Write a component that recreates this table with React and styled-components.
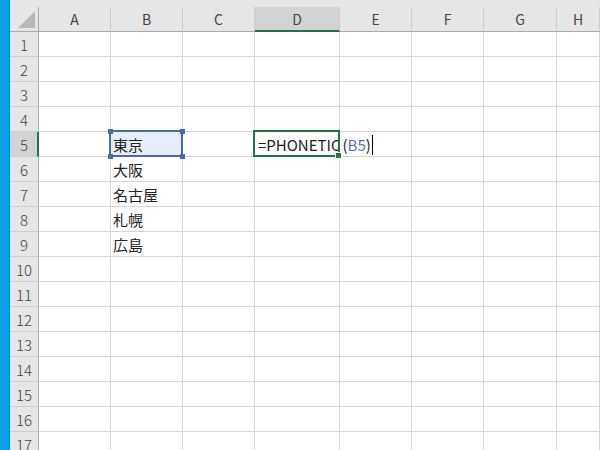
import styled, { createGlobalStyle } from "styled-components";

const COLS = ["A", "B", "C", "D", "E", "F", "G", "H"];
const ROWS = 17;

// cell contents by "col-row"
const values = {
  "B-6": "大阪",
  "B-7": "名古屋",
  "B-8": "札幌",
  "B-9": "広島",
};

const GlobalStyle = createGlobalStyle`
  html, body {
    margin: 0;
    padding: 0;
    background: #fff;
  }
  body {
    font-family: "Noto Sans CJK JP", "Noto Sans", sans-serif;
  }
`;

const App = () => {
  return (
    <Screen>
      <GlobalStyle />
      <SideBar />
      <Sheet>
        <TopStrip />
        <Grid>
          <Corner>
            <svg width="17" height="17" viewBox="0 0 17 17">
              <polygon points="17,0 17,17 0,17" fill="#b8b8b8" />
            </svg>
          </Corner>
          {COLS.map((c) => (
            <ColHead key={c} $active={c === "D"}>
              {c}
            </ColHead>
          ))}

          {Array.from({ length: ROWS }, (_, i) => i + 1).map((r) => (
            <Row key={r} r={r} />
          ))}
        </Grid>
      </Sheet>
    </Screen>
  );
};

const Row = ({ r }) => {
  return (
    <>
      <RowHead $active={r === 5}>{r}</RowHead>
      {COLS.map((c) => {
        if (r === 5 && c === "B") {
          return (
            <RefCell key={c}>
              東京
              <RefFrame>
                <Handle $x="left" $y="top" />
                <Handle $x="right" $y="top" />
                <Handle $x="left" $y="bottom" />
                <Handle $x="right" $y="bottom" />
              </RefFrame>
            </RefCell>
          );
        }
        if (r === 5 && c === "D") {
          return (
            <ActiveCell key={c}>
              <Formula>
                =PHONETIC<Paren $open>(</Paren>
                <RefText>B5</RefText>
                <Paren>)</Paren>
                <Caret />
              </Formula>
              <ActiveFrame>
                <FillHandle />
              </ActiveFrame>
            </ActiveCell>
          );
        }
        return <Cell key={c}>{values[`${c}-${r}`] || ""}</Cell>;
      })}
    </>
  );
};

const Screen = styled.div`
  display: flex;
  width: 600px;
  height: 450px;
  overflow: hidden;
  background: #fff;
`;

const SideBar = styled.div`
  width: 10px;
  flex-shrink: 0;
  background: #0ba2e8;
  border-right: 1px solid #0b86c4;
  box-sizing: border-box;
`;

const Sheet = styled.div`
  flex: 1;
  display: flex;
  flex-direction: column;
  min-width: 0;
`;

const TopStrip = styled.div`
  flex-shrink: 0;
  height: 7px;
  background: #e6e6e6;
`;

const Grid = styled.div`
  flex-shrink: 0;
  display: grid;
  grid-template-columns: 29px 72px 72px 72px 85px 72px 72px 73px 1fr;
  grid-auto-rows: 25px;
`;

const headBase = `
  box-sizing: border-box;
  display: flex;
  align-items: center;
  justify-content: center;
  color: #444;
  font-family: "Noto Sans CJK JP", "Noto Sans", sans-serif;
`;

const Corner = styled.div`
  ${headBase}
  background: #e6e6e6;
  border-right: 1px solid #ababab;
  border-bottom: 1px solid #ababab;
  justify-content: flex-end;
  align-items: flex-end;
  padding: 0 3px 3px 0;
`;

const ColHead = styled.div`
  ${headBase}
  font-size: 14px;
  background: ${(p) => (p.$active ? "#d3d3d3" : "#e6e6e6")};
  border-right: 1px solid #cdcdcd;
  border-bottom: ${(p) => (p.$active ? "2px solid #217346" : "1px solid #ababab")};
  padding-top: ${(p) => (p.$active ? "1px" : "0")};
`;

const RowHead = styled.div`
  ${headBase}
  font-size: 15px;
  font-weight: 300;
  background: ${(p) => (p.$active ? "#d3d3d3" : "#e6e6e6")};
  border-bottom: 1px solid #cdcdcd;
  border-right: ${(p) => (p.$active ? "2px solid #217346" : "1px solid #ababab")};
  padding-left: ${(p) => (p.$active ? "1px" : "0")};
`;

const Cell = styled.div`
  box-sizing: border-box;
  border-right: 1px solid #d6d6d6;
  border-bottom: 1px solid #d6d6d6;
  display: flex;
  align-items: center;
  padding: 1px 0 0 2px;
  font-size: 15px;
  color: #222;
  white-space: nowrap;
`;

const RefCell = styled(Cell)`
  position: relative;
  background: #e8eef9;
`;

const RefFrame = styled.div`
  position: absolute;
  left: -2px;
  top: -2px;
  right: -1px;
  bottom: -1px;
  border: 2px solid #4a6ca6;
  pointer-events: none;
`;

const Handle = styled.span`
  position: absolute;
  width: 5px;
  height: 5px;
  background: #4a6ca6;
  ${(p) => (p.$x === "left" ? "left: -3.5px;" : "right: -3.5px;")}
  ${(p) => (p.$y === "top" ? "top: -3.5px;" : "bottom: -3.5px;")}
`;

const ActiveCell = styled(Cell)`
  position: relative;
  z-index: 2;
  overflow: visible;
  padding-left: 3px;
`;

const Formula = styled.span`
  display: flex;
  align-items: center;
  color: #222;
`;

const Paren = styled.span`
  padding: ${(p) => (p.$open ? "0 0 0 2px" : "0")};
`;

const RefText = styled.span`
  color: #4f73b3;
`;

const Caret = styled.span`
  display: inline-block;
  width: 0;
  height: 20px;
  margin-left: 1px;
  border-left: 1px solid #000;
`;

const ActiveFrame = styled.div`
  position: absolute;
  left: -2px;
  top: -2px;
  right: -1px;
  bottom: -1px;
  border: 2px solid #217346;
  pointer-events: none;
`;

const FillHandle = styled.span`
  position: absolute;
  right: -4px;
  bottom: -4px;
  width: 5px;
  height: 5px;
  background: #217346;
  border: 1px solid #fff;
`;

export default App;
